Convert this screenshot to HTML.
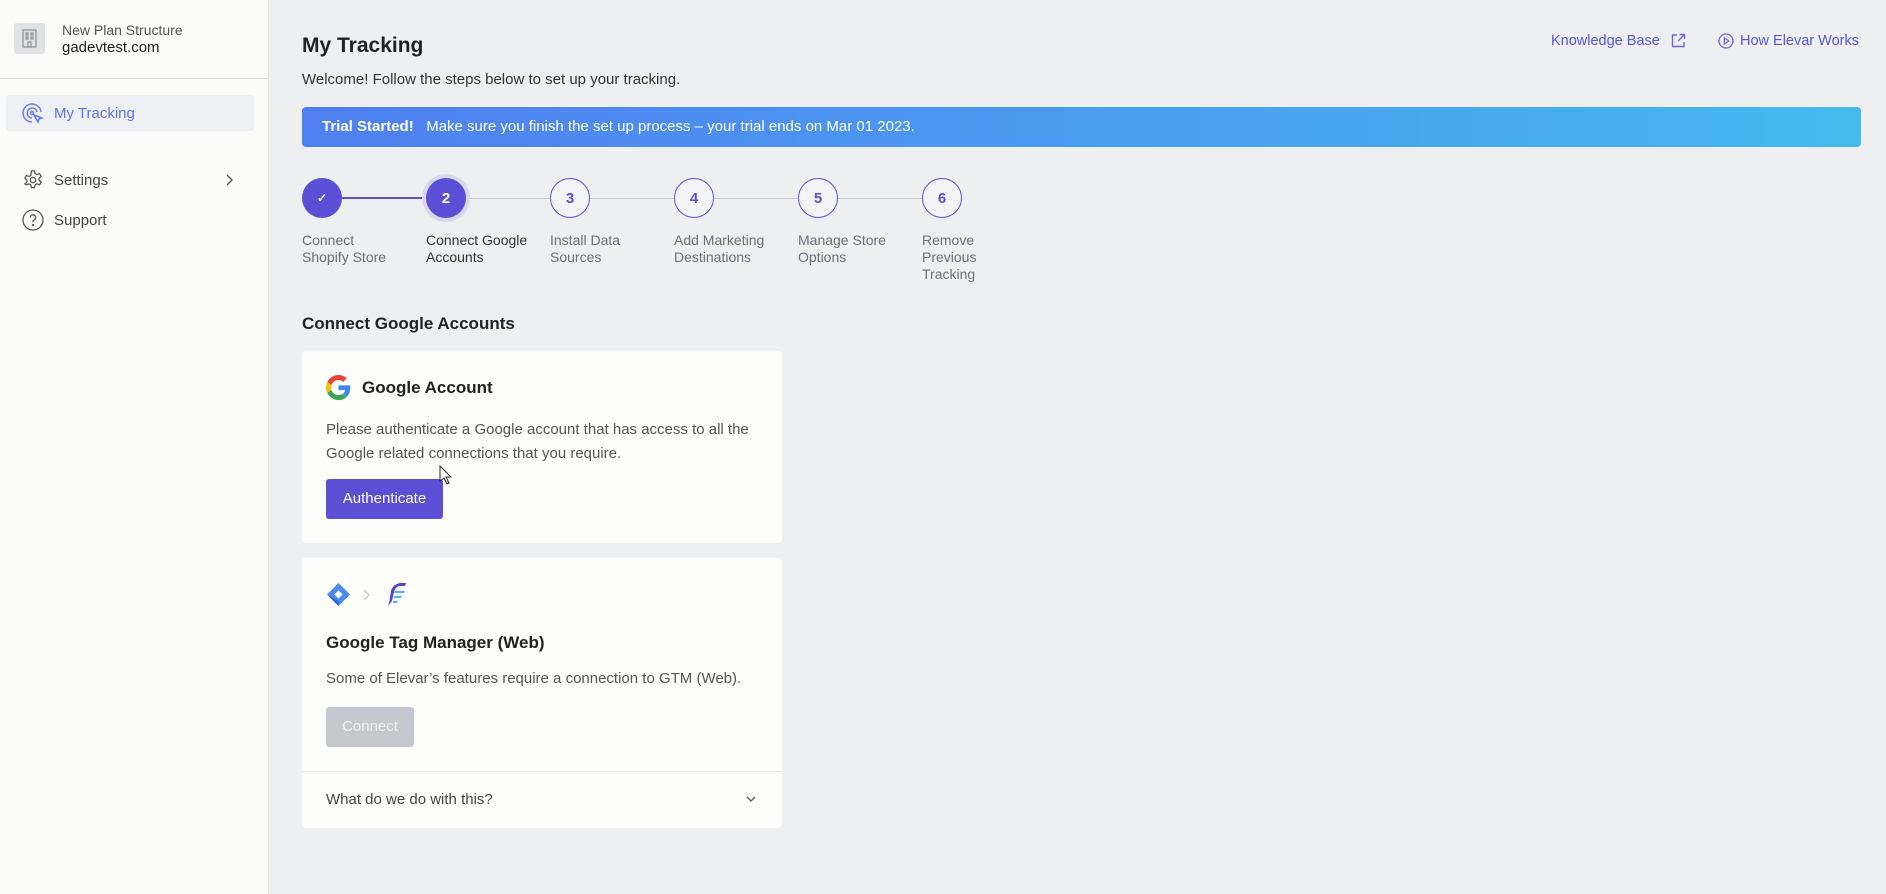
<!DOCTYPE html>
<html><head><meta charset="utf-8"><style>
*{box-sizing:border-box;margin:0;padding:0}
body{width:1886px;height:894px;overflow:hidden;font-family:"Liberation Sans",sans-serif;background:#eeeff1;position:relative;color:#222}
.abs{position:absolute;white-space:nowrap}
#side{position:absolute;left:0;top:0;width:269px;height:894px;background:#fbfbfa;border-right:1px solid #e6e6e6}
.circ{position:absolute;width:40px;height:40px;border-radius:50%;top:178px;display:flex;align-items:center;justify-content:center;font-size:15px;font-weight:bold}
.o{background:#f3f3f6;border:1.5px solid #5b4fd6;color:#5b4fd6}
.lbl{position:absolute;top:232px;font-size:14px;line-height:17px;color:#6b6f78}
.card{position:absolute;left:302px;width:480px;background:#fdfdfb;border-radius:4px}
</style></head><body>
<div id="side">
 <div class="abs" style="left:14px;top:23px;width:31px;height:31px;background:#dfe1e4;border-radius:3px"></div>
 <svg class="abs" style="left:21px;top:29px" width="17" height="19" viewBox="0 0 17 19" fill="none" stroke="#8a8f98" stroke-width="1.2"><rect x="2" y="1" width="13" height="17"/><rect x="5" y="4" width="2" height="2"/><rect x="10" y="4" width="2" height="2"/><rect x="5" y="8" width="2" height="2"/><rect x="10" y="8" width="2" height="2"/><rect x="7" y="13" width="3" height="5"/></svg>
 <div class="abs" style="left:62px;top:22px;font-size:14px;color:#555">New Plan Structure</div>
 <div class="abs" style="left:62px;top:39px;font-size:15px;color:#222">gadevtest.com</div>
 <div class="abs" style="left:0;top:78px;width:269px;height:1px;background:#ddd"></div>
 <div class="abs" style="left:6px;top:95px;width:248px;height:36px;background:#eef0f3;border-radius:3px"></div>
 <svg class="abs" style="left:22px;top:103px" width="22" height="22" viewBox="0 0 22 22" fill="none" stroke="#6a7ee6" stroke-width="1.5"><path d="M19 9A9 9 0 1 0 10 19"/><path d="M15 9A5 5 0 1 0 10 15"/><circle cx="10" cy="10" r="1.5"/><path d="M12 12l8 3-3 1-1 3z"/></svg>
 <div class="abs" style="left:54px;top:105px;font-size:15px;color:#5e73e0">My Tracking</div>
 <svg class="abs" style="left:22px;top:169px" width="22" height="22" viewBox="0 0 24 24" fill="none" stroke="#555" stroke-width="1.4"><circle cx="12" cy="12" r="3"/><path d="M10.3 2h3.4l.6 3 2 1.1 2.9-1 1.7 2.9-2.3 2v2.3l2.3 2-1.7 2.9-2.9-1-2 1.1-.6 3h-3.4l-.6-3-2-1.1-2.9 1L3.1 16.2l2.3-2V12l-2.3-2 1.7-2.9 2.9 1 2-1.1z"/></svg>
 <div class="abs" style="left:54px;top:172px;font-size:15px;color:#444">Settings</div>
 <svg class="abs" style="left:225px;top:174px" width="8" height="12" viewBox="0 0 8 12" fill="none" stroke="#555" stroke-width="1.4"><path d="M2 1l5 5-5 5"/></svg>
 <svg class="abs" style="left:22px;top:209px" width="22" height="22" viewBox="0 0 22 22" fill="none" stroke="#555" stroke-width="1.3"><circle cx="11" cy="11" r="10"/><path d="M8.3 8.5a2.7 2.7 0 1 1 3.5 2.6c-.6.3-.8.7-.8 1.4v.8"/><circle cx="11" cy="16" r=".5"/></svg>
 <div class="abs" style="left:54px;top:212px;font-size:15px;color:#444">Support</div>
</div>

<div class="abs" style="left:302px;top:34px;font-size:21px;font-weight:bold;color:#222">My Tracking</div>
<div class="abs" style="left:302px;top:71px;font-size:15px;color:#333">Welcome! Follow the steps below to set up your tracking.</div>
<div class="abs" style="left:1551px;top:33px;font-size:14.5px;color:#5a55d6">Knowledge Base</div>
<svg class="abs" style="left:1671px;top:33px" width="15" height="15" viewBox="0 0 15 15" fill="none" stroke="#6e66da" stroke-width="1.4"><path d="M6 2H1.5v11.5H13V9M8.5 1.5H13.5V6M13.5 1.5L7 8"/></svg>
<svg class="abs" style="left:1718px;top:33px" width="16" height="16" viewBox="0 0 16 16" fill="none" stroke="#6e66da" stroke-width="1.3"><circle cx="8" cy="8" r="7"/><path d="M6.3 5v6l4.5-3z"/></svg>
<div class="abs" style="left:1740px;top:33px;font-size:14.5px;color:#5a55d6">How Elevar Works</div>

<div class="abs" style="left:302px;top:107px;width:1559px;height:40px;border-radius:4px;background:linear-gradient(90deg,#4f7ff0,#45b9ee)"></div>
<div class="abs" style="left:322px;top:118px;font-size:15px;color:#fff"><b>Trial Started!</b>&nbsp;&nbsp; Make sure you finish the set up process – your trial ends on Mar 01 2023.</div>

<div class="abs" style="left:342px;top:197px;width:84px;height:2px;background:#5b4fd6"></div>
<div class="abs" style="left:466px;top:198px;width:456px;height:1px;background:#c8c8cc"></div>
<div class="circ" style="left:302px;background:#5b4fd6;color:#fff;font-size:12px">✓</div>
<div class="circ" style="left:426px;background:#5b4fd6;color:#fff;box-shadow:0 0 0 4px #d9d7ee">2</div>
<div class="circ o" style="left:550px">3</div>
<div class="circ o" style="left:674px">4</div>
<div class="circ o" style="left:798px">5</div>
<div class="circ o" style="left:922px">6</div>
<div class="lbl" style="left:302px">Connect<br>Shopify Store</div>
<div class="lbl" style="left:426px;color:#333">Connect Google<br>Accounts</div>
<div class="lbl" style="left:550px">Install Data<br>Sources</div>
<div class="lbl" style="left:674px">Add Marketing<br>Destinations</div>
<div class="lbl" style="left:798px">Manage Store<br>Options</div>
<div class="lbl" style="left:922px">Remove<br>Previous<br>Tracking</div>

<div class="abs" style="left:302px;top:314px;font-size:17px;font-weight:bold;color:#222">Connect Google Accounts</div>

<div class="card" style="top:351px;height:192px">
 <svg class="abs" style="left:24px;top:24px" width="25" height="25" viewBox="0 0 48 48"><path fill="#EA4335" d="M24 9.5c3.5 0 6.6 1.2 9.1 3.6l6.8-6.8C35.8 2.4 30.3 0 24 0 14.6 0 6.6 5.4 2.6 13.3l7.9 6.1C12.4 13.7 17.7 9.5 24 9.5z"/><path fill="#4285F4" d="M46.5 24.5c0-1.6-.1-3.1-.4-4.5H24v9h12.7c-.6 2.9-2.2 5.4-4.7 7.1l7.7 6c4.5-4.2 6.8-10.4 6.8-17.6z"/><path fill="#FBBC05" d="M10.5 28.6c-.5-1.4-.8-3-.8-4.6s.3-3.2.8-4.6l-7.9-6.1C.9 16.6 0 20.2 0 24s.9 7.4 2.6 10.7l7.9-6.1z"/><path fill="#34A853" d="M24 48c6.5 0 11.9-2.1 15.9-5.8l-7.7-6c-2.2 1.5-5 2.3-8.2 2.3-6.3 0-11.6-4.2-13.5-10l-7.9 6.1C6.6 42.6 14.6 48 24 48z"/></svg>
 <div class="abs" style="left:60px;top:27px;font-size:17px;font-weight:bold;color:#222">Google Account</div>
 <div class="abs" style="left:24px;top:67px;font-size:15px;line-height:24px;color:#555">Please authenticate a Google account that has access to all the<br>Google related connections that you require.</div>
 <div class="abs" style="left:24px;top:128px;width:117px;height:40px;background:#5b4fd6;border-radius:3px;color:#fff;font-size:15px;text-align:center;line-height:40px">Authenticate</div>
</div>

<div class="card" style="top:558px;height:270px">
 <svg class="abs" style="left:24px;top:24px" width="25" height="25" viewBox="0 0 24 24"><path d="M12 1l11 11-11 11L1 12z" fill="#4a89f0"/><path d="M12 8l4 4-4 4-4-4z" fill="#fdfdfb"/><path d="M1 12l4 4 7 7 0-4z" fill="#2c62c8"/></svg>
 <svg class="abs" style="left:60px;top:31px" width="8" height="12" viewBox="0 0 8 12" fill="none" stroke="#ccc" stroke-width="1.3"><path d="M2 1l5 5-5 5"/></svg>
 <svg class="abs" style="left:80px;top:24px" width="25" height="25" viewBox="0 0 25 25"><path d="M6 24c2-5 2-10 3-15 1-4 4-7 9-8h6l-1 3h-6c-3 1-4 3-5 6l-2 9z" fill="#5b3fd0"/><path d="M13 9h10l-1 2H12zM12 14h8l-1 2h-7zM11 19h5l-1 2h-4z" fill="#42b8ee"/></svg>
 <div class="abs" style="left:24px;top:75px;font-size:17px;font-weight:bold;color:#222">Google Tag Manager (Web)</div>
 <div class="abs" style="left:24px;top:112px;font-size:15px;color:#555">Some of Elevar’s features require a connection to GTM (Web).</div>
 <div class="abs" style="left:24px;top:149px;width:88px;height:40px;background:#c5c9cf;border-radius:3px;color:#eef0f2;font-size:15px;text-align:center;line-height:40px">Connect</div>
 <div class="abs" style="left:0;top:213px;width:480px;height:1px;background:#ebebeb"></div>
 <div class="abs" style="left:24px;top:233px;font-size:15px;color:#444">What do we do with this?</div>
 <svg class="abs" style="left:443px;top:237px" width="12" height="8" viewBox="0 0 12 8" fill="none" stroke="#555" stroke-width="1.3"><path d="M2 2l4 4 4-4"/></svg>
</div>
<svg class="abs" style="left:439px;top:465px" width="14" height="20" viewBox="0 0 14 20"><path d="M1 1v15l4-3 3 6 2-1-3-6h5z" fill="#fff" stroke="#222" stroke-width="1"/></svg>
</body></html>
